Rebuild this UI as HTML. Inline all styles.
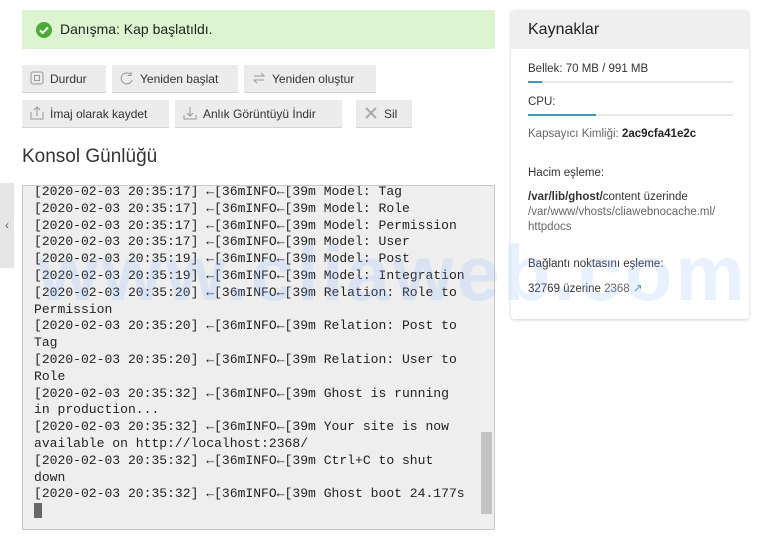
<!DOCTYPE html>
<html><head><meta charset="utf-8"><style>
*{margin:0;padding:0;box-sizing:border-box}
body{width:768px;height:541px;background:#fff;font-family:"Liberation Sans","DejaVu Sans",sans-serif;position:relative;overflow:hidden;color:#222}
.alert{position:absolute;left:22px;top:10px;width:473px;height:39px;background:#dcf5d0;font-size:14px;line-height:39px;padding-left:38px}
.alert svg{position:absolute;left:14px;top:12px}
.btn{position:absolute;height:28px;background:#ececec;border-bottom:1px solid #d4d4d4;font-size:12px;line-height:28px;color:#333;padding-left:28px}
.btn svg{position:absolute;left:8px;top:6px}
h2{position:absolute;left:22px;top:146px;font-size:19px;font-weight:normal;color:#333}
.tab{position:absolute;left:0;top:183px;width:14px;height:85px;background:#e6e6e6;font-size:12px;color:#666;line-height:85px;text-align:center}
.con{position:absolute;left:22px;top:185px;width:473px;height:345px;background:#eee;border:1px solid #c8c8c8;overflow:hidden}
.con pre{position:absolute;left:11px;top:-2px;font-family:"Liberation Mono","DejaVu Sans Mono",monospace;font-size:13.05px;line-height:16.8px;color:#222}
.sb{position:absolute;right:1px;top:0;width:13px;height:343px;background:#f0f0f0}
.thumb{position:absolute;right:2px;top:246px;width:11px;height:82px;background:#c4c4c4}
.card{position:absolute;left:511px;top:10px;width:238px;height:309px;background:#fff;border-radius:4px;box-shadow:0 1px 3px rgba(0,0,0,.2);font-size:11.5px;color:#333}
.card .hd{height:39px;background:#efefef;border-radius:4px 4px 0 0;font-size:16px;line-height:40px;padding-left:17px;color:#222}
.card .t{position:absolute;left:17px}
.bar{position:absolute;left:17px;width:205px;height:2px;background:#e6e8ea}
.bar i{display:block;height:2px;background:#3a9bb5}
.g{color:#666}
.wm{position:absolute;left:38px;top:228px;font-size:78px;font-weight:bold;color:rgba(120,180,255,.18);letter-spacing:3px;white-space:nowrap}
</style></head><body>
<div class="alert"><svg width="16" height="16"><circle cx="8" cy="8" r="8" fill="#4caa3a"/><path d="M4 8.3l2.6 2.6L12 5.5" stroke="#fff" stroke-width="2" fill="none"/></svg>Danışma: Kap başlatıldı.</div>
<div class="btn" style="left:22px;top:65px;width:84px"><svg width="14" height="14"><rect x="1" y="1" width="12" height="12" rx="2" fill="none" stroke="#999"/><rect x="4.5" y="4.5" width="5" height="5" fill="none" stroke="#999"/></svg>Durdur</div>
<div class="btn" style="left:112px;top:65px;width:126px"><svg width="14" height="14"><path d="M11 4A5.5 5.5 0 1 0 12 9M11 1v3.5H7.5" fill="none" stroke="#999"/></svg>Yeniden başlat</div>
<div class="btn" style="left:244px;top:65px;width:132px"><svg width="14" height="14"><path d="M2 5h10l-3-3M12 9H2l3 3" fill="none" stroke="#999"/></svg>Yeniden oluştur</div>
<div class="btn" style="left:22px;top:100px;width:147px"><svg width="14" height="14"><path d="M1 6v7h12V6M7 10V1M4 4l3-3 3 3" fill="none" stroke="#999"/></svg>İmaj olarak kaydet</div>
<div class="btn" style="left:175px;top:100px;width:167px"><svg width="14" height="14"><path d="M1 9v4h12V9M7 1v9M4 7l3 3 3-3" fill="none" stroke="#999"/></svg>Anlık Görüntüyü İndir</div>
<div class="btn" style="left:356px;top:100px;width:56px"><svg width="14" height="14"><path d="M2 2l10 10M12 2L2 12" fill="none" stroke="#aaa" stroke-width="2"/></svg>Sil</div>
<h2>Konsol Günlüğü</h2>
<div class="tab">‹</div>
<div class="con"><pre>[2020-02-03 20:35:17] ←[36mINFO←[39m Model: Tag
[2020-02-03 20:35:17] ←[36mINFO←[39m Model: Role
[2020-02-03 20:35:17] ←[36mINFO←[39m Model: Permission
[2020-02-03 20:35:17] ←[36mINFO←[39m Model: User
[2020-02-03 20:35:19] ←[36mINFO←[39m Model: Post
[2020-02-03 20:35:19] ←[36mINFO←[39m Model: Integration
[2020-02-03 20:35:20] ←[36mINFO←[39m Relation: Role to
Permission
[2020-02-03 20:35:20] ←[36mINFO←[39m Relation: Post to
Tag
[2020-02-03 20:35:20] ←[36mINFO←[39m Relation: User to
Role
[2020-02-03 20:35:32] ←[36mINFO←[39m Ghost is running
in production...
[2020-02-03 20:35:32] ←[36mINFO←[39m Your site is now
available on http://localhost:2368/
[2020-02-03 20:35:32] ←[36mINFO←[39m Ctrl+C to shut
down
[2020-02-03 20:35:32] ←[36mINFO←[39m Ghost boot 24.177s
<span style="background:#666;color:#666">_</span></pre>
<div class="sb"></div><div class="thumb"></div></div>
<div class="card"><div class="hd">Kaynaklar</div>
<div class="t" style="top:53px">Bellek: 70 MB / 991 MB</div>
<div class="bar" style="top:71px"><i style="width:14px"></i></div>
<div class="t" style="top:86px">CPU:</div>
<div class="bar" style="top:104px"><i style="width:68px"></i></div>
<div class="t g" style="top:118px">Kapsayıcı Kimliği: <b style="color:#222">2ac9cfa41e2c</b></div>
<div class="t" style="top:157px">Hacim eşleme:</div>
<div class="t" style="top:180px;width:215px;line-height:15px"><b>/var/lib/ghost/</b>content üzerinde<br><span class="g">/var/www/vhosts/cliawebnocache.ml/</span><br><span class="g">httpdocs</span></div>
<div class="t" style="top:248px">Bağlantı noktasını eşleme:</div>
<div class="t" style="top:271px">32769 üzerine <span class="g">2368</span> <span style="color:#3a9bd5">↗</span></div>
</div>
<div class="wm">www.cliaweb.com</div>
</body></html>
